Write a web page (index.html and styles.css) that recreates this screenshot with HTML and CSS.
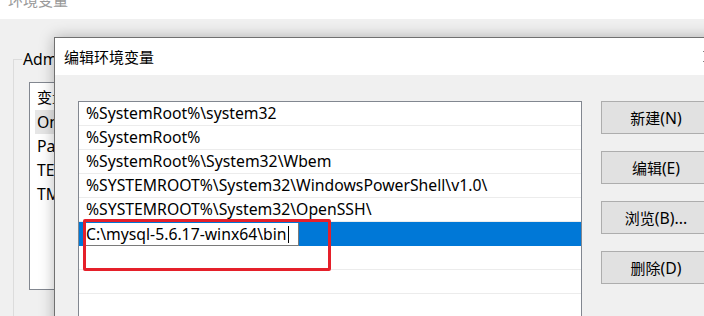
FILE: index.html
```html
<!DOCTYPE html>
<html lang="zh-CN">
<head>
<meta charset="utf-8">
<title>编辑环境变量</title>
<link rel="stylesheet" href="styles.css">
</head>
<body>
<div class="bgwin">
  <div class="bg-title"><span>环境变量</span></div>
  <div class="bg-body">
    <fieldset class="group">
      <legend>Administrator 的用户变量(U)</legend>
      <div class="uvars">
        <div class="uhead"><span class="zh">变量</span></div>
        <div class="urow sel">OneDrive</div>
        <div class="urow">Path</div>
        <div class="urow">TEMP</div>
        <div class="urow">TMP</div>
      </div>
    </fieldset>
  </div>
</div>

<div class="dialog">
  <div class="dlg-title">
    <span class="dlg-name">编辑环境变量</span>
    <svg class="close" width="11" height="11" viewBox="0 0 11 11"><path d="M0.5 0.5 L10.5 10.5 M10.5 0.5 L0.5 10.5" stroke="#000" stroke-width="1" fill="none"/></svg>
  </div>
  <div class="dlg-body">
    <div class="paths">
      <div class="prow">%SystemRoot%\system32</div>
      <div class="prow">%SystemRoot%</div>
      <div class="prow">%SystemRoot%\System32\Wbem</div>
      <div class="prow">%SYSTEMROOT%\System32\WindowsPowerShell\v1.0\</div>
      <div class="prow">%SYSTEMROOT%\System32\OpenSSH\</div>
      <div class="prow active"><div class="edit">C:\mysql-5.6.17-winx64\bin<span class="caret"></span></div></div>
      <div class="prow"></div>
      <div class="prow"></div>
      <div class="prow"></div>
    </div>
    <div class="buttons">
      <div class="btn"><span class="zh">新建</span>(N)</div>
      <div class="btn"><span class="zh">编辑</span>(E)</div>
      <div class="btn"><span class="zh">浏览</span>(B)...</div>
      <div class="btn"><span class="zh">删除</span>(D)</div>
    </div>
  </div>
</div>

<div class="mark"></div>
</body>
</html>
```

FILE: styles.css
```css
* { box-sizing: border-box; }
html, body {
  margin: 0;
  padding: 0;
}
body {
  width: 704px;
  height: 316px;
  overflow: hidden;
  position: relative;
  background: #f0f0f0;
  font-family: "Noto Sans", "Noto Sans CJK SC", sans-serif;
  font-size: 15.75px;
  color: #000;
}
.zh {
  font-family: "Noto Sans CJK SC", sans-serif;
  font-size: 15px;
}

/* background window */
.bgwin {
  width: 704px;
  height: 316px;
  display: flex;
  flex-direction: column;
  overflow: hidden;
}
.bg-title {
  flex: none;
  height: 19px;
  background: #fff;
  overflow: hidden;
  padding-left: 8px;
}
.bg-title span {
  display: block;
  font-family: "Noto Sans CJK SC", sans-serif;
  font-size: 15px;
  line-height: 15px;
  margin-top: -8px;
  color: #999;
}
.bg-body {
  flex: none;
  height: 297px;
  background: #f0f0f0;
  padding: 30px 0 0 13px;
}
.group {
  margin: 0;
  padding: 0 0 0 15px;
  border: 1px solid #dcdcdc;
  height: 280px;
  width: 400px;
  min-width: 0;
}
.group legend {
  padding: 0 1px;
  margin-left: -7px;
  line-height: 20px;
  height: 20px;
}
.uvars {
  margin-top: 13px;
  width: 200px;
  height: 208px;
  border: 1px solid #828790;
  background: #fff;
}
.uhead {
  height: 27px;
  line-height: 27px;
  padding-left: 7px;
}
.urow {
  height: 24px;
  line-height: 24px;
  margin-left: 5px;
  padding-left: 2px;
}
.urow.sel { background: #e6e6e6; }

/* dialog window */
.dialog {
  position: absolute;
  left: 54px;
  top: 37px;
  width: 700px;
  height: 320px;
  border: 1px solid #707070;
  background: #f0f0f0;
  box-shadow: 0 0 14px rgba(0, 0, 0, 0.28);
  display: flex;
  flex-direction: column;
}
.dlg-title {
  flex: none;
  height: 37px;
  background: #fff;
  display: flex;
  align-items: center;
  padding-left: 9px;
}
.dlg-name {
  flex: none;
  width: 639px;
  font-family: "Noto Sans CJK SC", sans-serif;
  font-size: 15px;
}
.close {
  flex: none;
  display: block;
}
.dlg-body {
  flex: 1;
  display: flex;
  align-items: flex-start;
  gap: 19px;
  padding: 26px 0 0 23px;
}
.paths {
  width: 504px;
  height: 260px;
  border: 1px solid #828790;
  background: #fff;
  flex: none;
}
.prow {
  height: 24px;
  line-height: 23px;
  border-bottom: 1px solid #ececec;
  padding-left: 7px;
  white-space: nowrap;
}
.prow.active {
  background: #0078d7;
  border-bottom-color: #0078d7;
  padding-left: 5px;
  padding-top: 1px;
}
.edit {
  width: 215px;
  height: 23px;
  line-height: 21px;
  background: #fff;
  border-right: 1px solid #7a7a7a;
  border-bottom: 1px solid #7a7a7a;
  padding-left: 2px;
  display: flex;
  align-items: center;
}
.caret {
  display: inline-block;
  width: 1px;
  height: 17px;
  background: #000;
  margin-left: 1px;
}
.buttons {
  display: flex;
  flex-direction: column;
  gap: 17px;
  flex: none;
}
.btn {
  width: 110px;
  height: 33px;
  border: 1px solid #adadad;
  background: #e1e1e1;
  display: flex;
  align-items: center;
  justify-content: center;
}

/* red annotation overlay */
.mark {
  position: absolute;
  left: 83px;
  top: 219px;
  width: 248px;
  height: 52px;
  border: 3px solid #e5202a;
  border-radius: 2px;
}
```
